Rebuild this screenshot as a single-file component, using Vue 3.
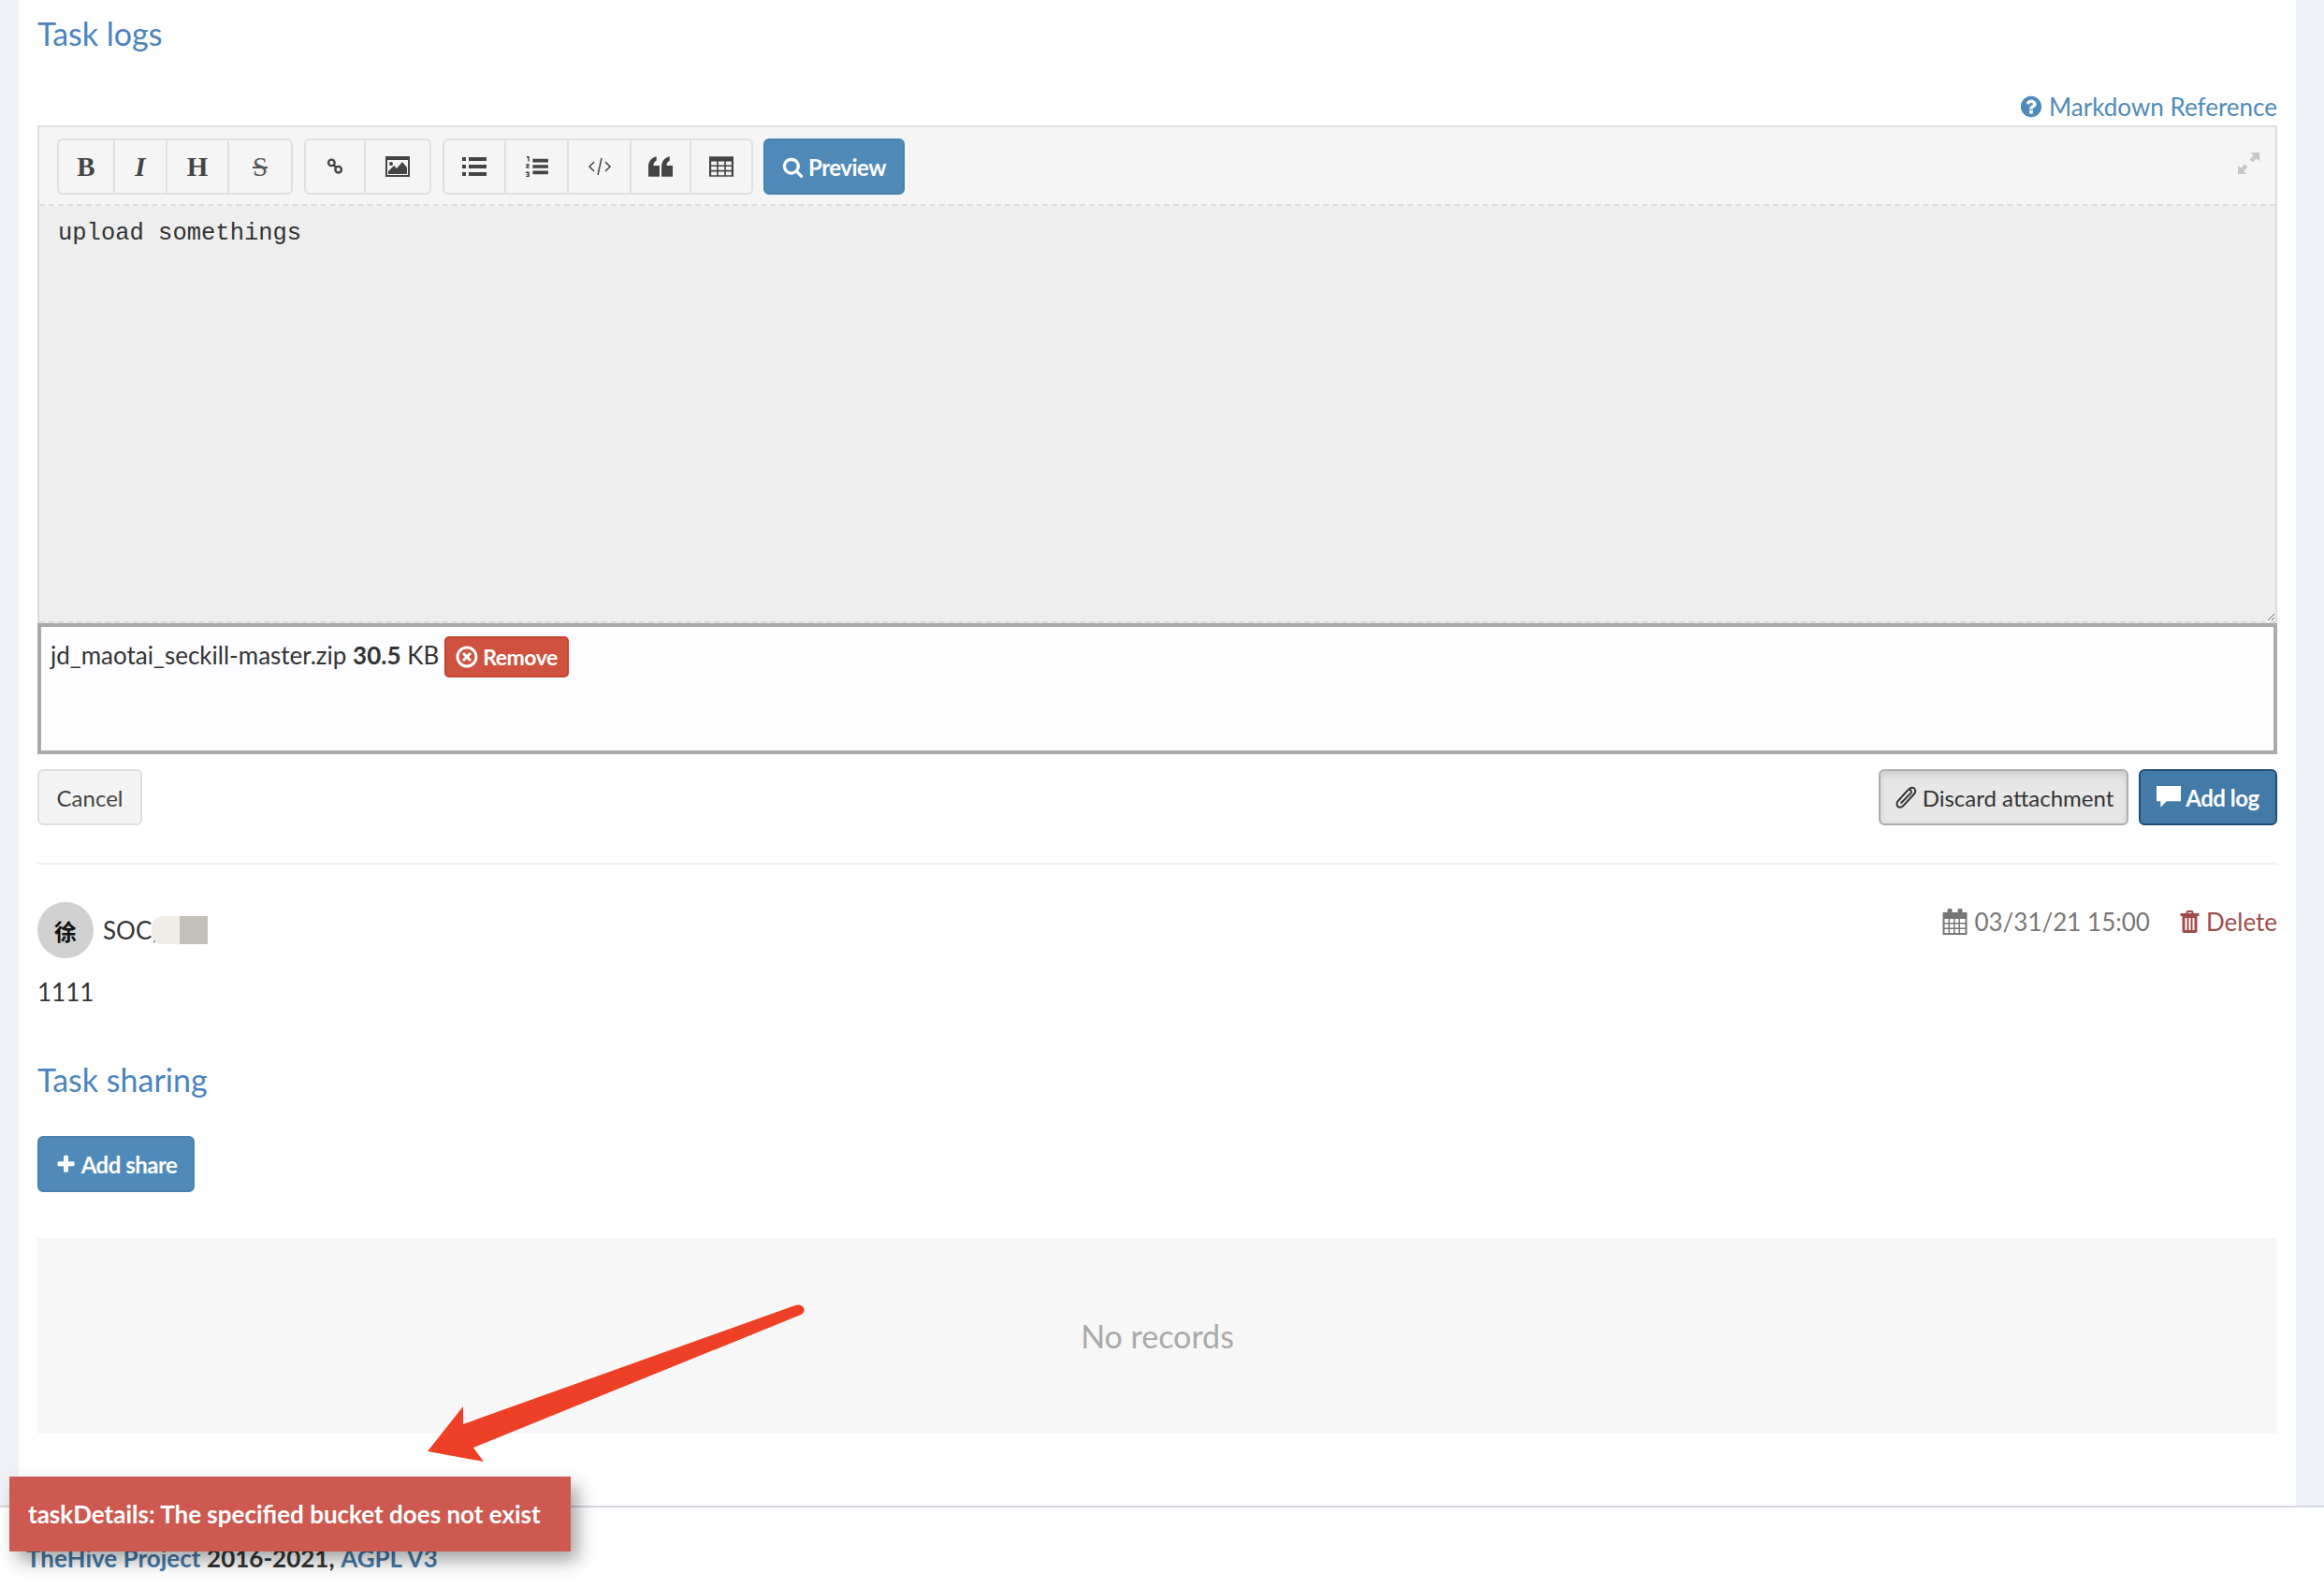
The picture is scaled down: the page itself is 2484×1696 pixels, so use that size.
<script setup>
const toolbarGroups = [
  [
    { key: 'bold', label: 'B', width: 60 },
    { key: 'italic', label: 'I', width: 56 },
    { key: 'heading', label: 'H', width: 66 },
    { key: 'strike', label: 'S', width: 66 }
  ],
  [
    { key: 'link', icon: 'link', width: 64 },
    { key: 'image', icon: 'image', width: 68 }
  ],
  [
    { key: 'ul', icon: 'ul', width: 66 },
    { key: 'ol', icon: 'ol', width: 67 },
    { key: 'code', icon: 'code', width: 67 },
    { key: 'quote', icon: 'quote', width: 64 },
    { key: 'table', icon: 'table', width: 64 }
  ]
]

const questionPath = 'M1024 1376v-192q0-14-9-23t-23-9h-192q-14 0-23 9t-9 23v192q0 14 9 23t23 9h192q14 0 23-9t9-23zm256-672q0-88-55.500-163t-138.500-116-170-41q-243 0-371 213-15 24 8 42l132 100q7 6 19 6 16 0 25-12 53-68 86-92 34-24 86-24 48 0 85.500 26t37.500 59q0 38-20 61t-68 45q-63 28-115.500 86.500t-52.500 125.500v36q0 14 9 23t23 9h192q14 0 23-9t9-23q0-19 21.500-49.500t54.500-49.500q32-18 49-28.500t46-35 44.500-48 28-60.500 12.500-81zm384 192q0 209-103 385.500t-279.500 279.500-385.500 103-385.500-103-279.500-279.500-103-385.500 103-385.500 279.500-279.500 385.500-103 385.500 103 279.500 279.500 103 385.500z'
const plusPath = 'M1600 736v192q0 40-28 68t-68 28h-416v416q0 40-28 68t-68 28h-192q-40 0-68-28t-28-68v-416h-416q-40 0-68-28t-28-68v-192q0-40 28-68t68-28h416v-416q0-40 28-68t68-28h192q40 0 68 28t28 68v416h416q40 0 68 28t28 68z'
const searchPath = 'M1216 832q0-185-131.500-316.500t-316.500-131.500-316.500 131.500-131.500 316.500 131.500 316.500 316.500 131.500 316.500-131.500 131.500-316.500zm512 832q0 52-38 90t-90 38q-54 0-90-38l-343-342q-179 124-399 124-143 0-273.500-55.500t-225-150-150-225-55.500-273.500 55.500-273.500 150-225 225-150 273.500-55.500 273.500 55.500 225 150 150 225 55.500 273.500q0 220-124 399l343 343q37 37 37 90z'
</script>

<template>
  <div class="page">
    <div class="panel">
      <h3 class="section-title">Task logs</h3>

      <div class="md-ref">
        <svg class="ref-icon" viewBox="0 0 1792 1792"><path :d="questionPath" /></svg>
        <span>Markdown Reference</span>
      </div>

      <div class="editor">
        <div class="toolbar">
          <div v-for="(group, i) in toolbarGroups" :key="i" class="btn-group">
            <div
              v-for="item in group"
              :key="item.key"
              class="tool"
              :class="item.key"
              :style="{ width: item.width + 'px' }"
            >
              <span v-if="item.label">{{ item.label }}</span>
              <svg v-else-if="item.icon === 'link'" class="tool-icon" viewBox="0 0 24 24">
                <g fill="none" stroke="currentColor" stroke-width="2.6">
                  <circle cx="8" cy="7.500" r="3.600" />
                  <circle cx="16" cy="15.500" r="3.600" />
                  <path d="M10 10l4 3.500" />
                </g>
              </svg>
              <svg v-else-if="item.icon === 'image'" class="tool-icon wide" viewBox="0 0 26 22">
                <path fill-rule="evenodd" d="M0 0h26v22h-26zM2 4v16h22v-16z" />
                <path d="M3 19v-3l6-6 3 3 6-7 5 6v7z" />
                <circle cx="6" cy="8" r="2" />
              </svg>
              <svg v-else-if="item.icon === 'ul'" class="tool-icon wide" viewBox="0 0 26 22">
                <path d="M0 1h4v4h-4zM0 9h4v4h-4zM0 17h4v4h-4zM7 1h19v4h-19zM7 9h19v4h-19zM7 17h19v4h-19z" />
              </svg>
              <svg v-else-if="item.icon === 'ol'" class="tool-icon wide" viewBox="0 0 26 24">
                <path d="M8 3h18v4h-18zM8 10h18v4h-18zM8 17h18v4h-18zM1 0h3v6h-1.500v-4h-1.500zM0 9h4v1.500l-2 2h2v1.500h-4v-1.500l2-2h-2zM0 18h4v6h-4v-1.500h2.500v-1h-1.500v-1h1.500v-1h-2.500z" />
              </svg>
              <svg v-else-if="item.icon === 'code'" class="tool-icon wide" viewBox="0 0 26 22">
                <path fill="none" stroke="currentColor" stroke-width="1.500" d="M7 6l-5 5 5 5M19 6l5 5-5 5M15 2l-4 18" />
              </svg>
              <svg v-else-if="item.icon === 'quote'" class="tool-icon wide" viewBox="0 0 24 20">
                <path d="M0 20v-10c0-5 3-9 8-10v4c-2 1-3 3-3 5h6v11zM13 20v-10c0-5 3-9 8-10v4c-2 1-3 3-3 5h6v11z" />
              </svg>
              <svg v-else-if="item.icon === 'table'" class="tool-icon wide" viewBox="0 0 24 20">
                <path fill-rule="evenodd" d="M0 0h24v20h-24zM2 5v3.500h5.500v-3.500zM9 5v3.500h6v-3.500zM16.500 5v3.500h5.500v-3.500zM2 10v3.500h5.500v-3.500zM9 10v3.500h6v-3.500zM16.500 10v3.500h5.500v-3.500zM2 15v3.500h5.500v-3.500zM9 15v3.500h6v-3.500zM16.500 15v3.500h5.500v-3.500z" />
              </svg>
            </div>
          </div>
          <button class="btn btn-primary preview">
            <svg class="btn-icon" viewBox="0 0 1792 1792"><path :d="searchPath" /></svg>
            Preview
          </button>
          <svg class="expand" viewBox="0 0 24 24">
            <path d="M14 1h9v9l-3-3-4 4-3-3 4-4zM1 23v-9l3 3 4-4 3 3-4 4 3 3z" />
          </svg>
        </div>
        <textarea class="md-input" readonly>upload somethings</textarea>
      </div>

      <div class="attachment">
        <span>jd_maotai_seckill-master.zip <b>30.5</b> KB</span>
        <button class="btn-remove">
          <svg class="remove-icon" viewBox="0 0 24 24">
            <circle cx="12" cy="12" r="10" fill="none" stroke="currentColor" stroke-width="3" />
            <path d="M8 8l8 8M16 8l-8 8" fill="none" stroke="currentColor" stroke-width="3" />
          </svg>
          Remove
        </button>
      </div>

      <div class="actions">
        <button class="btn btn-default">Cancel</button>
        <div class="actions-right">
          <button class="btn btn-active">
            <svg class="clip" viewBox="0 0 24 24">
              <path fill="none" stroke="currentColor" stroke-width="1.800" d="M5 15l10-11c2-2 5-2 6 0s1 3-1 5l-11 12c-2 1-4 1-5 0s-1-3 0-5l10-11c1-1 3-1 3 0s1 2 0 3l-10 10" />
            </svg>
            Discard attachment
          </button>
          <button class="btn btn-primary-dark">
            <svg class="comment" viewBox="0 0 24 22">
              <path d="M0 0h24v15h-14l-6 6v-6h-4z" />
            </svg>
            Add log
          </button>
        </div>
      </div>

      <div class="log">
        <div class="log-head">
          <div class="avatar">徐</div>
          <div class="author">
            <span>SOC,</span>
            <i class="mask-light"></i>
            <i class="mask-dark"></i>
          </div>
          <div class="log-meta">
            <svg class="cal" viewBox="0 0 26 28">
              <path fill-rule="evenodd" d="M0 4h5v-2a2 2 0 0 1 5 0v2h6v-2a2 2 0 0 1 5 0v2h5v24h-26zM2 11v4h4v-4zM7.500 11v4h4v-4zM13 11v4h4v-4zM18.500 11v4h5.500v-4zM2 16.500v4h4v-4zM7.500 16.500v4h4v-4zM13 16.500v4h4v-4zM18.500 16.500v4h5.500v-4zM2 22v4h4v-4zM7.500 22v4h4v-4zM13 22v4h4v-4zM18.500 22v4h5.500v-4z" />
            </svg>
            <span class="date">03/31/21 15:00</span>
            <svg class="trash" viewBox="0 0 20 24">
              <path fill-rule="evenodd" d="M6 3v-1a2 2 0 0 1 2-2h4a2 2 0 0 1 2 2v1h6v3h-2v16a2 2 0 0 1-2 2h-12a2 2 0 0 1-2-2v-16h-2v-3zM8 3h4v-1h-4zM5 8v13h2v-13zM9 8v13h2v-13zM13 8v13h2v-13z" />
            </svg>
            <span>Delete</span>
          </div>
        </div>
        <p class="log-body">1111</p>
      </div>

      <h3 class="section-title sharing">Task sharing</h3>
      <button class="btn btn-primary add-share">
        <svg class="btn-icon" viewBox="0 0 1792 1792"><path :d="plusPath" /></svg>
        Add share
      </button>
      <div class="empty">No records</div>
    </div>

    <footer class="footer">
      <a>TheHive Project</a> <b>2016-2021,</b> <a>AGPL V3</a>
    </footer>

    <!-- arrow annotation drawn over the page -->
    <svg class="arrow" viewBox="0 0 2484 1696">
      <path d="M457 1551L495 1503L495 1522L850 1395Q857 1393 859 1398Q861 1402 856 1405L506 1547L517 1562Z" />
    </svg>

    <div class="toast">taskDetails: The specified bucket does not exist</div>
  </div>
</template>

<style scoped>
.page {
  position: relative;
  width: 2484px;
  height: 1696px;
  overflow: hidden;
  background: #eef2f7;
  font-family: Lato, "Noto Sans", sans-serif;
  font-size: 26px;
  color: #333;
}

.panel {
  box-sizing: border-box;
  width: 2434px;
  height: 1609px;
  margin-left: 20px;
  padding: 0 20px;
  background: #fff;
}

.section-title {
  margin: 0;
  font-size: 34px;
  font-weight: 400;
  line-height: 72px;
  color: #4b84bd;
}

.md-ref {
  display: flex;
  justify-content: flex-end;
  align-items: center;
  gap: 6px;
  height: 62px;
  padding-top: 22px;
  box-sizing: border-box;
  color: #4f8ab8;
  font-size: 26px;
}

.ref-icon {
  width: 26px;
  height: 26px;
  fill: currentColor;
}

.editor {
  border: 2px solid #ddd;
  border-bottom: 0;
  box-sizing: border-box;
  height: 532px;
  display: flex;
  flex-direction: column;
}

.toolbar {
  display: flex;
  align-items: flex-start;
  gap: 12px;
  height: 84px;
  box-sizing: border-box;
  padding: 12px 0 0 19px;
  background: #f5f5f5;
  border-bottom: 2px dashed #ddd;
}

.btn-group {
  display: flex;
  height: 60px;
  box-sizing: border-box;
  border: 2px solid #e0e0e0;
  border-radius: 6px;
}

.tool {
  display: flex;
  align-items: center;
  justify-content: center;
  box-sizing: border-box;
  color: #444;
  border-right: 2px solid #e0e0e0;
  font-family: "Liberation Serif", serif;
  font-size: 29px;
  font-weight: 700;
}

.tool:last-child {
  border-right: 0;
}

.tool.italic span {
  font-style: italic;
}

.tool.strike span {
  font-weight: 400;
  text-decoration: line-through;
  color: #555;
}

.tool-icon {
  width: 22px;
  height: 22px;
  fill: currentColor;
}

.tool-icon.wide {
  width: 26px;
}

.btn {
  display: inline-flex;
  align-items: center;
  justify-content: center;
  gap: 5px;
  box-sizing: border-box;
  height: 60px;
  padding: 0;
  border: 2px solid transparent;
  border-radius: 6px;
  font-family: Lato, "Noto Sans", sans-serif;
  font-size: 24px;
}

.btn-icon {
  width: 23px;
  height: 23px;
  fill: currentColor;
}

.btn-primary {
  background: #4f8ab8;
  border-color: #4a82ae;
  color: #fff;
  font-weight: 700;
  letter-spacing: -0.5px;
}

.preview {
  width: 151px;
  margin-left: -1px;
}

.expand {
  width: 25px;
  height: 25px;
  margin: 14px 16px 0 auto;
  fill: #c6c6c6;
}

.md-input {
  flex: 1;
  display: block;
  box-sizing: border-box;
  width: 100%;
  padding: 12px 20px;
  border: 0;
  border-bottom: 2px dashed #ddd;
  outline: 0;
  background: #eee;
  color: #333;
  font-family: "Liberation Mono", monospace;
  font-size: 25.500px;
  line-height: 36px;
}

.attachment {
  display: flex;
  align-items: flex-start;
  gap: 6px;
  box-sizing: border-box;
  height: 140px;
  padding: 10px 10px;
  border: 4px solid #aaa;
  background: #fdfcff;
  line-height: 40px;
}

.attachment b {
  font-weight: 700;
}

.btn-remove {
  display: inline-flex;
  align-items: center;
  gap: 5px;
  box-sizing: border-box;
  width: 133px;
  height: 44px;
  padding: 0 0 0 10px;
  border: 2px solid #c4432f;
  border-radius: 5px;
  background: #cf5240;
  color: #fff;
  font-family: Lato, "Noto Sans", sans-serif;
  font-size: 23px;
  font-weight: 700;
  letter-spacing: -0.5px;
}

.remove-icon {
  width: 24px;
  height: 24px;
  fill: none;
}

.actions {
  display: flex;
  justify-content: space-between;
  margin-top: 16px;
  padding-bottom: 40px;
  border-bottom: 2px solid #f0f0f0;
}

.actions-right {
  display: flex;
  gap: 11px;
}

.btn-default {
  width: 112px;
  background: #f4f4f4;
  border-color: #ddd;
  color: #444;
}

.btn-active {
  width: 267px;
  background: #e7e7e7;
  border-color: #adadad;
  color: #333;
  box-shadow: inset 0 4px 7px rgba(0, 0, 0, 0.12);
}

.clip {
  width: 26px;
  height: 26px;
  color: #333;
}

.btn-primary-dark {
  width: 148px;
  background: #447aa8;
  border-color: #204d74;
  color: #fff;
  font-weight: 700;
  letter-spacing: -0.5px;
}

.comment {
  width: 26px;
  height: 24px;
  fill: currentColor;
}

.log {
  padding-top: 40px;
}

.log-head {
  display: flex;
  align-items: center;
  height: 60px;
}

.avatar {
  display: flex;
  align-items: center;
  justify-content: center;
  width: 60px;
  height: 60px;
  border-radius: 50%;
  background: #d0d0d0;
  color: #111;
  font-family: "Noto Sans CJK SC", sans-serif;
  font-size: 24px;
  font-weight: 700;
}

.author {
  display: flex;
  align-items: center;
  margin-left: 10px;
}

.mask-light {
  width: 30px;
  height: 30px;
  margin-left: -6px;
  border-radius: 12px 0 0 12px;
  background: #f0ece8;
}

.mask-dark {
  width: 30px;
  height: 30px;
  background: #c3c0ba;
}

.log-meta {
  display: flex;
  align-items: center;
  margin-left: auto;
  margin-bottom: 18px;
  color: #a04c4c;
}

.cal {
  width: 27px;
  height: 28px;
  margin-right: 7px;
  fill: #777;
}

.date {
  margin-right: 32px;
  color: #777;
}

.trash {
  width: 21px;
  height: 24px;
  margin-right: 7px;
  fill: currentColor;
}

.log-body {
  margin: 18px 0 0;
  line-height: 36px;
}

.sharing {
  margin-top: 46px;
  line-height: 60px;
}

.add-share {
  width: 168px;
  margin-top: 30px;
}

.empty {
  display: flex;
  align-items: center;
  justify-content: center;
  height: 209px;
  margin-top: 49px;
  background: #f7f7f7;
  color: #aaa;
  font-size: 34px;
}

.footer {
  box-sizing: border-box;
  height: 87px;
  padding: 36px 0 0 28px;
  background: #fff;
  border-top: 2px solid #d2d6de;
  font-size: 26px;
  line-height: 36px;
  color: #333;
}

.footer a {
  color: #447aa8;
  font-weight: 700;
}

.arrow {
  position: absolute;
  left: 0;
  top: 0;
  width: 2484px;
  height: 1696px;
  fill: #ee4026;
  pointer-events: none;
}

.toast {
  position: absolute;
  left: 10px;
  top: 1578px;
  width: 600px;
  height: 80px;
  box-sizing: border-box;
  padding: 0 0 0 20px;
  display: flex;
  align-items: center;
  background: #cd5950;
  color: #fff;
  font-size: 26px;
  font-weight: 700;
  box-shadow: 8px 10px 18px rgba(0, 0, 0, 0.35);
}
</style>

<style>
html,
body {
  margin: 0;
  background: #eef2f7;
}
</style>
